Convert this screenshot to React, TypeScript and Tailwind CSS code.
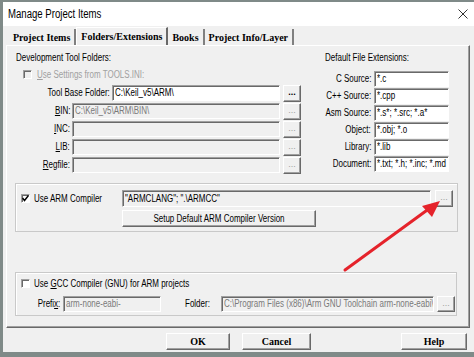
import React from "react";

const sunk =
  "border border-t-[#a0a0a0] border-l-[#a0a0a0] border-r-white border-b-white shadow-[inset_1px_1px_0_#696969]";
const raised =
  "border border-t-white border-l-white border-r-[#696969] border-b-[#696969] shadow-[inset_-1px_-1px_0_#a0a0a0]";

// the screenshot is squeezed sideways, so sans text is narrowed to match
const T = ({ children, o = "origin-left" }: { children: React.ReactNode; o?: string }) => (
  <span className={`inline-block ${o} scale-x-[0.8] whitespace-nowrap`}>{children}</span>
);

const Field = ({ w, value = "", disabled = false, gray = false }: { w: string; value?: string; disabled?: boolean; gray?: boolean }) => (
  <div
    className={`${w} h-[16px] ${sunk} ${disabled || gray ? "bg-[#f0f0f0]" : "bg-white"} ${disabled ? "text-[#7a7a7a]" : "text-black"} px-[2px] text-[10px] leading-[14px] whitespace-nowrap overflow-hidden`}
  >
    <T>{value}</T>
  </div>
);

const Dots = ({ disabled = false, h = "h-[17px]" }: { disabled?: boolean; h?: string }) => (
  <div
    className={`w-[18px] ${h} ${raised} bg-[#f0f0f0] flex items-center justify-center text-[9px] leading-none pb-[2px] ${disabled ? "text-[#a0a0a0]" : "text-black font-bold"}`}
  >
    ...
  </div>
);

const Check = ({ checked = false, disabled = false }: { checked?: boolean; disabled?: boolean }) => (
  <div className={`w-[9px] h-[9px] ${sunk} ${disabled ? "bg-[#f0f0f0]" : "bg-white"} flex items-center justify-center`}>
    {checked && (
      <svg width="7" height="7" viewBox="0 0 7 7">
        <polyline points="0.5,3 2.5,5.5 6.5,0.5" fill="none" stroke="#000" strokeWidth="1.5" />
      </svg>
    )}
  </div>
);

const Row = ({ label, lw, fw, value, disabled }: { label: string; lw: string; fw: string; value?: string; disabled?: boolean }) => (
  <div className="flex items-center h-[16px] mt-[2px]">
    <div className={`${lw} text-right pr-[2px] text-[10px] leading-none`}>
      <T o="origin-right">
        <span className="underline">{label[0]}</span>
        {label.slice(1)}
      </T>
    </div>
    <Field w={fw} value={value} disabled={disabled} gray={disabled} />
    <div className="ml-[3px]">
      <Dots disabled={disabled} />
    </div>
  </div>
);

const Ext = ({ label, value }: { label: string; value: string }) => (
  <div className="flex items-center h-[16px] mt-[1px]">
    <div className="w-[67px] text-right pr-[3px] text-[10px] leading-none">
      <T o="origin-right">{label}</T>
    </div>
    <Field w="w-[75px]" value={value} />
  </div>
);

const Tab = ({ label, active = false }: { label: string; active?: boolean }) => (
  <div
    className={`flex items-center px-[4px] font-['Liberation_Serif',serif] font-bold text-[10px] ${
      active
        ? "h-[18px] border-l border-t border-l-white border-t-white border-r-2 border-r-[#696969] bg-[#f0f0f0]"
        : "h-[16px] border-r-2 border-r-[#808080]"
    }`}
  >
    {label}
  </div>
);

export default function App() {
  return (
    <div className="relative w-[474px] h-[357px] overflow-hidden bg-[#7f8a88] pl-[3px] pt-[2px] pb-[5px] flex flex-col font-['Liberation_Sans',Arial,sans-serif] text-black">
      <div className="flex-1 flex flex-col bg-[#f0f0f0]">
        {/* title bar */}
        <div className="h-[24px] bg-white flex items-center justify-between pl-[5px] pr-[6px]">
          <span className="text-[12px]">
            <T>Manage Project Items</T>
          </span>
          <svg width="10" height="10" viewBox="0 0 10 10">
            <path d="M0.5 0.5 L9.5 9.5 M9.5 0.5 L0.5 9.5" stroke="#333" strokeWidth="1" />
          </svg>
        </div>

        {/* tabs */}
        <div className="h-[19px] flex items-end pl-[6px]">
          <Tab label="Project Items" />
          <Tab label="Folders/Extensions" active />
          <Tab label="Books" />
          <Tab label="Project Info/Layer" />
        </div>

        {/* panel */}
        <div className="ml-[3px] mr-[4px] h-[283px] border-l border-t border-l-white border-t-white border-r border-b border-r-[#696969] border-b-[#696969] shadow-[inset_-1px_-1px_0_#a0a0a0] flex flex-col">
          <div className="flex">
            {/* left column */}
            <div className="w-[295px] pl-[9px]">
              <div className="mt-[6px] h-[12px] text-[10px] leading-[12px]">
                <T>Development Tool Folders:</T>
              </div>
              <div className="mt-[5px] h-[11px] flex items-center pl-[7px] gap-[5px]">
                <Check disabled />
                <span className="text-[10px] text-[#a0a0a0]">
                  <T>
                    <span className="underline">U</span>se Settings from TOOLS.INI:
                  </T>
                </span>
              </div>
              <div className="flex items-center h-[16px] mt-[5px]">
                <div className="w-[96px] text-right pr-[2px] text-[10px] leading-none">
                  <T o="origin-right">Tool Base Folder:</T>
                </div>
                <Field w="w-[168px]" value="C:\Keil_v5\ARM\" />
                <div className="ml-[3px]">
                  <Dots />
                </div>
              </div>
              <Row label="BIN:" lw="w-[56px]" fw="w-[208px]" value="C:\Keil_v5\ARM\BIN\" disabled />
              <Row label="INC:" lw="w-[56px]" fw="w-[208px]" disabled />
              <Row label="LIB:" lw="w-[56px]" fw="w-[208px]" disabled />
              <Row label="Regfile:" lw="w-[56px]" fw="w-[208px]" disabled />
            </div>

            {/* right column */}
            <div className="ml-[5px]">
              <div className="mt-[6px] h-[12px] pl-[18px] text-[10px] leading-[12px]">
                <T>Default File Extensions:</T>
              </div>
              <div className="mt-[7px]">
                <Ext label="C Source:" value="*.c" />
                <Ext label="C++ Source:" value="*.cpp" />
                <Ext label="Asm Source:" value="*.s*; *.src; *.a*" />
                <Ext label="Object:" value="*.obj; *.o" />
                <Ext label="Library:" value="*.lib" />
                <Ext label="Document:" value="*.txt; *.h; *.inc; *.md" />
              </div>
            </div>
          </div>

          {/* ARM compiler group */}
          <div className="mt-[10px] ml-[8px] w-[443px] h-[49px] border border-[#c9c9c9] shadow-[inset_1px_1px_0_#ffffff] flex pt-[6px]">
            <div className="w-[106px] h-[17px] flex items-center pl-[5px] gap-[4px]">
              <Check checked />
              <span className="text-[10px]">
                <T>Use ARM Compiler</T>
              </span>
            </div>
            <div className="flex flex-col">
              <div className="flex">
                <div className={`w-[309px] h-[17px] ${sunk} bg-[#f0f0f0] px-[2px] text-[10px] leading-[15px] whitespace-nowrap overflow-hidden`}>
                  <T>"ARMCLANG"; ".\ARMCC"</T>
                </div>
                <div className="ml-[4px]">
                  <Dots disabled />
                </div>
              </div>
              <div className={`mt-[3px] w-[194px] h-[17px] ${raised} bg-[#f0f0f0] flex items-center justify-center text-[10px]`}>
                <T o="origin-center">Setup Default ARM Compiler Version</T>
              </div>
            </div>
          </div>

          {/* GCC group */}
          <div className="mt-[40px] ml-[8px] w-[442px] h-[44px] border border-[#c9c9c9] shadow-[inset_1px_1px_0_#ffffff] flex flex-col">
            <div className="mt-[5px] h-[11px] flex items-center pl-[5px] gap-[4px]">
              <Check />
              <span className="text-[10px]">
                <T>
                  Use <span className="underline">G</span>CC Compiler (GNU) for ARM projects
                </T>
              </span>
            </div>
            <div className="mt-[7px] flex items-center">
              <div className="w-[47px] text-right pr-[3px] text-[10px] leading-none">
                <T o="origin-right">
                  Prefi<span className="underline">x</span>:
                </T>
              </div>
              <Field w="w-[98px]" value="arm-none-eabi-" disabled />
              <div className="ml-[24px] w-[36px] text-[10px] leading-none">
                <T>Folder:</T>
              </div>
              <Field w="w-[213px]" value="C:\Program Files (x86)\Arm GNU Toolchain arm-none-eabi\" disabled />
              <div className="ml-[3px]">
                <Dots disabled h="h-[16px]" />
              </div>
            </div>
          </div>
        </div>

        {/* buttons */}
        <div className="mt-[5px] flex font-['Liberation_Serif',serif] font-bold text-[10px]">
          <div className={`ml-[163px] w-[64px] h-[17px] ${raised} flex items-center justify-center`}>OK</div>
          <div className={`ml-[12px] w-[69px] h-[17px] ${raised} flex items-center justify-center`}>Cancel</div>
          <div className={`ml-[90px] w-[66px] h-[17px] ${raised} flex items-center justify-center`}>Help</div>
        </div>
      </div>

      {/* red annotation arrow */}
      <svg className="absolute inset-0 pointer-events-none" width="474" height="357" viewBox="0 0 474 357">
        <line x1="345" y1="270" x2="430" y2="208" stroke="#e5232b" strokeWidth="3" strokeLinecap="round" />
        <polygon points="440,201 422,206 432,217" fill="#e5232b" />
      </svg>
    </div>
  );
}
